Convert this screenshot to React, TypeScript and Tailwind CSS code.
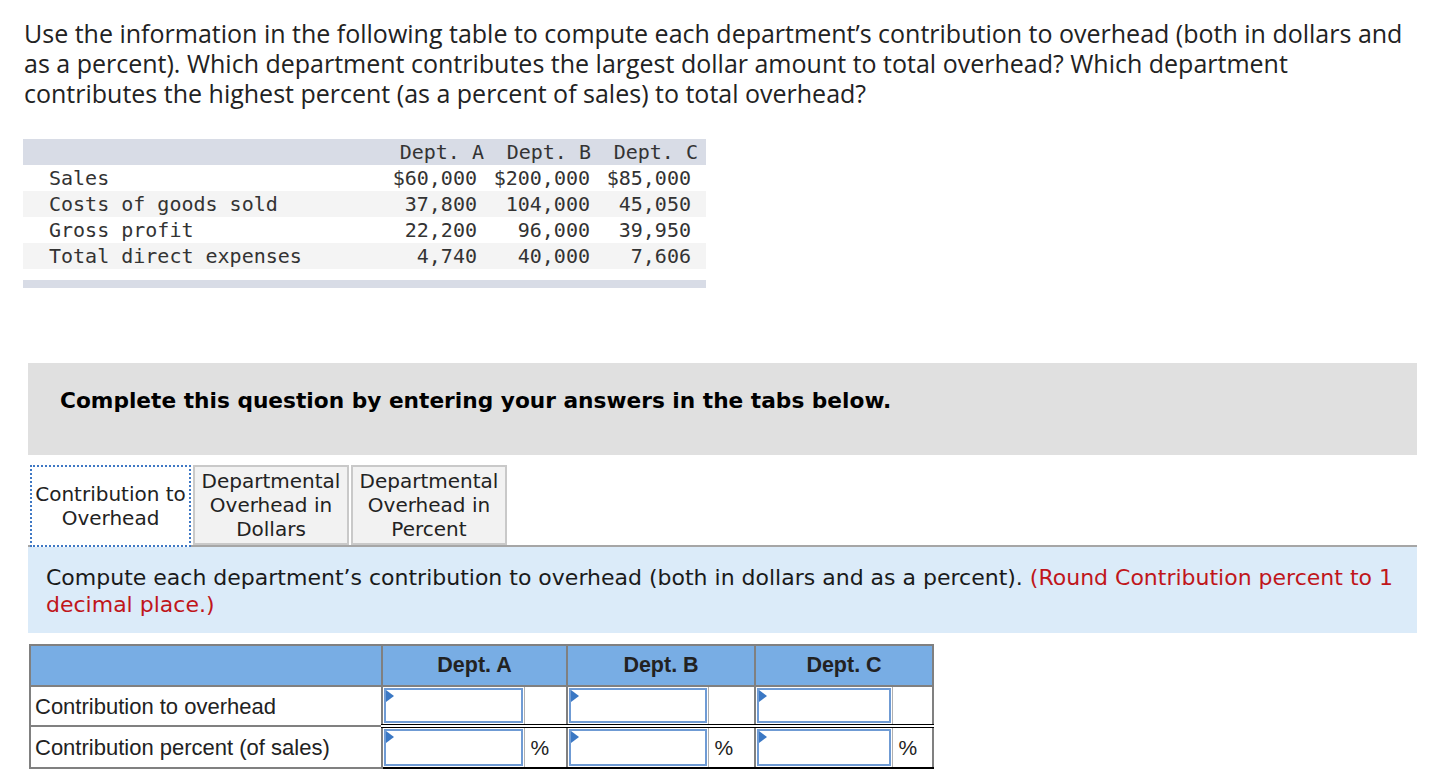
const dataRows = [
  { label: 'Sales', a: '$60,000', b: '$200,000', c: '$85,000', shade: false },
  { label: 'Costs of goods sold', a: '37,800', b: '104,000', c: '45,050', shade: true },
  { label: 'Gross profit', a: '22,200', b: '96,000', c: '39,950', shade: false },
  { label: 'Total direct expenses', a: '4,740', b: '40,000', c: '7,606', shade: true },
];

const tabs = [
  { lines: ['Contribution to', 'Overhead'], active: true },
  { lines: ['Departmental', 'Overhead in', 'Dollars'], active: false },
  { lines: ['Departmental', 'Overhead in', 'Percent'], active: false },
];

function AnswerBox() {
  return (
    <div className="relative h-full w-full border-2 border-[#6f9bd4] bg-white">
      <span className="absolute left-0 top-0 h-0 w-0 border-y-[6px] border-l-[8px] border-y-transparent border-l-[#3b78c4]" />
    </div>
  );
}

function DataTable() {
  return (
    <div className="ml-[23px] mt-[31px] w-[683px] font-['DejaVu_Sans_Mono',monospace] text-[20px] leading-[26px] text-[#333]">
      <div className="flex h-[26px] bg-[#d8dce6]">
        <div className="w-[357px]" />
        <div className="w-[104px] text-right">Dept. A</div>
        <div className="w-[107px] text-right">Dept. B</div>
        <div className="w-[107px] text-right">Dept. C</div>
      </div>
      {dataRows.map((r) => (
        <div key={r.label} className={`flex h-[26px] ${r.shade ? 'bg-[#f4f4f4]' : 'bg-white'}`}>
          <div className="w-[357px] pl-[26px]">{r.label}</div>
          <div className="w-[97px] text-right">{r.a}</div>
          <div className="w-[113px] text-right">{r.b}</div>
          <div className="w-[101px] text-right">{r.c}</div>
        </div>
      ))}
      <div className="mt-[11px] h-[8px] bg-[#d8dce6]" />
    </div>
  );
}

function Tabs() {
  return (
    <div className="relative z-10 ml-[30px] mt-[10px] -mb-[2px] flex items-end gap-[2px] font-['DejaVu_Sans',Verdana,sans-serif] text-[20px] leading-[24px] text-[#222]">
      {tabs.map((t, i) => (
        <div
          key={i}
          className={
            t.active
              ? 'flex h-[82px] w-[161px] flex-col justify-center border-2 border-dotted border-[#3f78c4] bg-white text-center'
              : 'mb-[2px] flex h-[80px] w-[156px] flex-col justify-center border-2 border-[#c9c9c9] bg-[#f2f2f2] text-center'
          }
        >
          {t.lines.map((l) => (
            <div key={l} className="whitespace-nowrap">{l}</div>
          ))}
        </div>
      ))}
    </div>
  );
}

function AnswerTable() {
  const cell = 'border-2 border-[#808080]';
  return (
    <table className="ml-[29px] mt-[11px] border-collapse font-['Liberation_Sans',Arial,sans-serif] text-[22px] text-[#222]">
      <colgroup>
        <col className="w-[352px]" />
        <col className="w-[142px]" />
        <col className="w-[43px]" />
        <col className="w-[141px]" />
        <col className="w-[47px]" />
        <col className="w-[137px]" />
        <col className="w-[41px]" />
      </colgroup>
      <thead>
        <tr className="h-[41px] bg-[#78ade4]">
          <th className={cell} />
          <th colSpan={2} className={`${cell} text-[21.5px] font-bold`}>Dept. A</th>
          <th colSpan={2} className={`${cell} text-[21.5px] font-bold`}>Dept. B</th>
          <th colSpan={2} className={`${cell} text-[21.5px] font-bold`}>Dept. C</th>
        </tr>
      </thead>
      <tbody>
        <tr className="h-[40px]">
          <td className={`${cell} pl-[4px]`}>Contribution to overhead</td>
          {[0, 1, 2].map((k) => [
            <td key={`i${k}`} className="h-[40px] border-b-[4px] border-l-2 border-b-black border-double border-l-[#808080] p-px">
              <AnswerBox />
            </td>,
            <td key={`u${k}`} className="border-b-[4px] border-l border-r-2 border-b-black border-double border-l-[#b0b0b0] border-r-[#808080]" />,
          ])}
        </tr>
        <tr className="h-[42px]">
          <td className={`${cell} pl-[4px]`}>Contribution percent (of sales)</td>
          {[0, 1, 2].map((k) => [
            <td key={`i${k}`} className="h-[42px] border-b-2 border-l-2 border-b-black border-l-[#808080] p-px">
              <AnswerBox />
            </td>,
            <td key={`u${k}`} className="border-b-2 border-l border-r-2 border-b-black border-l-[#b0b0b0] border-r-[#808080] pl-[6px] text-[21px]">
              %
            </td>,
          ])}
        </tr>
      </tbody>
    </table>
  );
}

export default function App() {
  return (
    <div className="min-h-[783px] w-[1444px] bg-white pt-[18px]">
      <p className="ml-[24px] whitespace-nowrap font-['Open_Sans',sans-serif] text-[25px] leading-[30px] text-[#222]">
        Use the information in the following table to compute each department’s contribution to overhead (both in dollars and
        <br />
        as a percent). Which department contributes the largest dollar amount to total overhead? Which department
        <br />
        contributes the highest percent (as a percent of sales) to total overhead?
      </p>

      <DataTable />

      <div className="ml-[28px] mt-[75px] flex h-[92px] w-[1389px] items-center bg-[#e0e0e0] pb-[15px] pl-[32px] font-['DejaVu_Sans',Verdana,sans-serif] text-[21.7px] font-bold text-black">
        Complete this question by entering your answers in the tabs below.
      </div>

      <Tabs />

      <div className="ml-[28px] w-[1389px] border-t-2 border-[#a6a6a6] bg-[#dbebf9] px-[18px] pb-[15px] pt-[17px] font-['DejaVu_Sans',Verdana,sans-serif] text-[22px] leading-[27px] text-[#1a1a1a]">
        Compute each department’s contribution to overhead (both in dollars and as a percent).{' '}
        <span className="text-[#c0161b]">(Round Contribution percent to 1 decimal place.)</span>
      </div>

      <AnswerTable />
    </div>
  );
}
